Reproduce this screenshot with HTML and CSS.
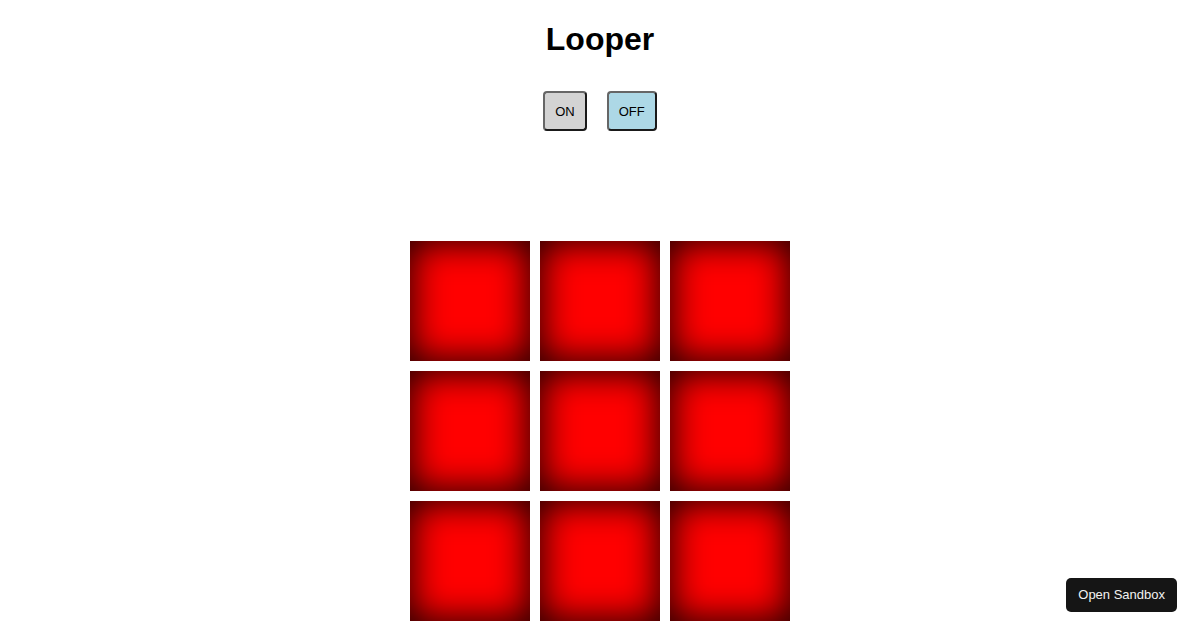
FILE: index.html
```html
<!DOCTYPE html>
<html lang="en">
<head>
    <meta charset="UTF-8">
    <title>Looper</title>
    <link rel="stylesheet" href="styles.css">
</head>
<body>
    <h1 class="title">Looper</h1>
    <div class="controls">
        <button class="btn btn-on">ON</button>
        <button class="btn btn-off">OFF</button>
    </div>
    <div class="pads">
        <div class="pad"></div>
        <div class="pad"></div>
        <div class="pad"></div>
        <div class="pad"></div>
        <div class="pad"></div>
        <div class="pad"></div>
        <div class="pad"></div>
        <div class="pad"></div>
        <div class="pad"></div>
    </div>
    <a class="sandbox" href="#">Open Sandbox</a>
</body>
</html>
```

FILE: styles.css
```css
body {
    margin: 0;
    font-family: "Liberation Sans", Arial, sans-serif;
    background: #fff;
}
.title {
    margin: 21px 0 0;
    font-size: 32px;
    line-height: 37px;
    text-align: center;
    color: #000;
}
.controls {
    display: flex;
    justify-content: center;
    gap: 20px;
    margin-top: 33px;
}
.btn {
    height: 40px;
    padding: 0 10px;
    font-family: "Liberation Sans", Arial, sans-serif;
    font-size: 13px;
    color: #000;
    border: 2px solid #222;
    border-color: #666 #1a1a1a #1a1a1a #666;
    border-radius: 4px;
}
.btn-on {
    background: #d3d3d3;
}
.btn-off {
    background: #add8e6;
}
.pads {
    display: grid;
    grid-template-columns: repeat(3, 120px);
    gap: 10px;
    justify-content: center;
    margin-top: 110px;
}
.pad {
    width: 120px;
    height: 120px;
    background: #ff0000;
    box-shadow: inset 0 0 34px 3px rgba(0, 0, 0, 0.85);
}
.sandbox {
    position: fixed;
    right: 23px;
    bottom: 18px;
    padding: 9px 12px;
    line-height: 16px;
    background: #151515;
    color: #f2f2f2;
    font-family: "Liberation Sans", Arial, sans-serif;
    font-size: 13px;
    border-radius: 5px;
    text-decoration: none;
}
```
